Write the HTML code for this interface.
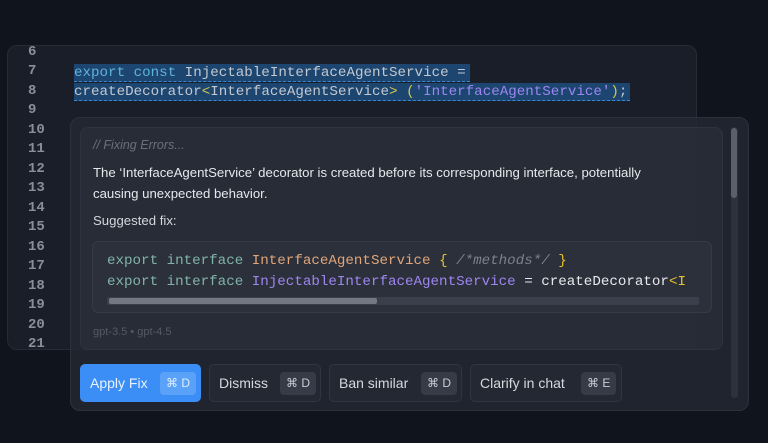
<!DOCTYPE html>
<html><head><meta charset="utf-8"><style>
*{margin:0;padding:0;box-sizing:border-box}
body{width:768px;height:443px;overflow:hidden;background:#10141d;font-family:"Liberation Sans",sans-serif;position:relative}
.ed{position:absolute;left:7px;top:45px;width:690px;height:305px;background:#1a1e28;border:1px solid #262b36;border-radius:10px}
.ln{position:absolute;left:28px;font-family:"Liberation Mono",monospace;font-size:14px;color:#8a8e98;font-weight:bold}
.mono{font-family:"Liberation Mono",monospace;font-size:14.2px;white-space:pre}
.hl{position:absolute;background:#1c4570;border-bottom:1px dashed #3b86d0;height:18px;line-height:18px}
.ov{position:absolute;left:70px;top:117px;width:679px;height:294px;background:rgba(36,40,51,0.8);border:1px solid #2c313c;border-radius:10px}
.card{position:absolute;left:80px;top:127px;width:643px;height:223px;background:rgba(42,47,58,0.7);border:1px solid #2e3340;border-radius:8px}
.t{position:absolute;font-size:13px;color:#e6e8ec}
.code{position:absolute;left:92px;top:241px;width:620px;height:72px;background:#2b303b;border:1px solid #343a46;border-radius:6px}
.btn{position:absolute;top:364px;height:38px;border-radius:5px;background:#232833;border:1px solid #2f3541;color:#d6d9de;font-size:14px;line-height:36px;padding-left:9px}
.k{position:absolute;top:7px;height:23px;line-height:23px;border-radius:4px;background:#353b47;color:#c9ccd2;font-size:12px;padding:0 6px}
</style></head><body>
<div class="ed"></div>
<div class="ln" style="top:44px">6</div>
<div class="ln" style="top:63px">7</div>
<div class="ln" style="top:83px">8</div>
<div class="ln" style="top:102px">9</div>
<div class="ln" style="top:122px">10</div>
<div class="ln" style="top:141px">11</div>
<div class="ln" style="top:161px">12</div>
<div class="ln" style="top:180px">13</div>
<div class="ln" style="top:200px">14</div>
<div class="ln" style="top:219px">15</div>
<div class="ln" style="top:239px">16</div>
<div class="ln" style="top:258px">17</div>
<div class="ln" style="top:278px">18</div>
<div class="ln" style="top:297px">19</div>
<div class="ln" style="top:317px">20</div>
<div class="ln" style="top:336px">21</div>
<div class="hl mono" style="left:74px;top:64px;width:396px;color:#c4c8cf"><span style="color:#5fb3dc">export const</span> InjectableInterfaceAgentService =</div>
<div class="hl mono" style="left:74px;top:83px;width:556px;color:#c4c8cf">createDecorator<span style="color:#d8c84a">&lt;</span>InterfaceAgentService<span style="color:#d8c84a">&gt;</span> <span style="color:#d8c84a">(</span><span style="color:#9d86f0">'InterfaceAgentService'</span><span style="color:#d8c84a">)</span>;</div>
<div class="ov"></div>
<div class="card"></div>
<div style="position:absolute;left:731px;top:127px;width:7px;height:271px;background:#2c313b;border-radius:3px"></div>
<div style="position:absolute;left:731px;top:128px;width:6px;height:70px;background:#5a5f69;border-radius:3px"></div>
<div class="t" style="left:93px;top:138px;color:#6a6f79;font-style:italic;font-size:12.5px">// Fixing Errors...</div>
<div class="t" style="left:93px;top:162px;line-height:21px;width:580px;font-size:13.2px">The ‘InterfaceAgentService’ decorator is created before its corresponding interface, potentially causing unexpected behavior.</div>
<div class="t" style="left:93px;top:213px;color:#d3d6dc;font-size:13.2px">Suggested fix:</div>
<div class="code"></div>
<div class="mono" style="position:absolute;left:107px;top:251px;color:#82b3a8;line-height:21px">export interface <span style="color:#e0a57a">InterfaceAgentService</span> <span style="color:#e6c230">{</span> <span style="color:#7b808a;font-style:italic">/*methods*/</span> <span style="color:#e6c230">}</span>
export interface <span style="color:#9d86f0">InjectableInterfaceAgentService</span> <span style="color:#e6e8ec">= createDecorator</span><span style="color:#e6c230">&lt;I</span></div>
<div style="position:absolute;left:107px;top:297px;width:592px;height:8px;background:#3a404b;border-radius:2px"></div>
<div style="position:absolute;left:109px;top:298px;width:268px;height:6px;background:#737882;border-radius:2px"></div>
<div class="t" style="left:93px;top:326px;color:#555a64;font-size:11px">gpt-3.5 • gpt-4.5</div>
<div class="btn" style="left:80px;width:121px;background:#3b8ef5;border-color:#3b8ef5;color:#eaf3ff">Apply Fix<span class="k" style="left:79px;background:#5aa2f7;color:#dfeeff">⌘ D</span></div>
<div class="btn" style="left:209px;width:112px">Dismiss<span class="k" style="left:70px">⌘ D</span></div>
<div class="btn" style="left:329px;width:133px">Ban similar<span class="k" style="left:91px">⌘ D</span></div>
<div class="btn" style="left:470px;width:152px">Clarify in chat<span class="k" style="left:110px">⌘ E</span></div>
</body></html>
